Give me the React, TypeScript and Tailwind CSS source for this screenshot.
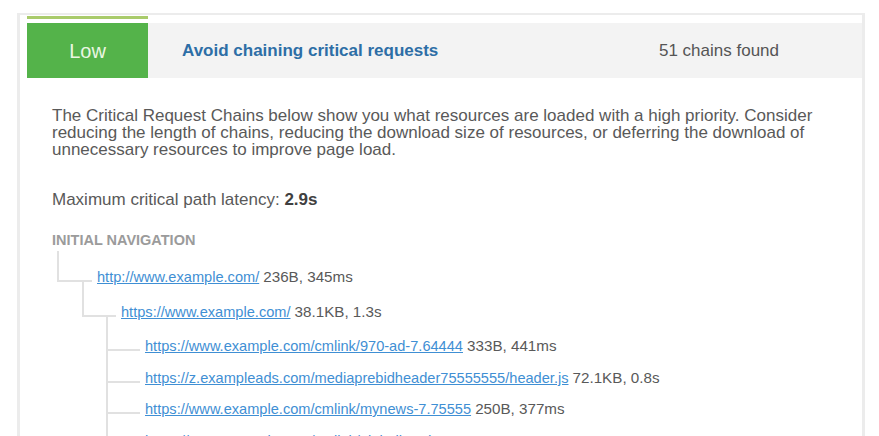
import React from "react";

const chains = [
  { pad: "pl-0", h: "h-[31px]", w: "w-[35px]", url: "http://www.example.com/", info: "236B, 345ms" },
  { pad: "pl-[25px]", h: "h-[35px]", w: "w-[34px]", url: "https://www.example.com/", info: "38.1KB, 1.3s" },
  { pad: "pl-[49px]", h: "h-[34px]", w: "w-[34px]", url: "https://www.example.com/cmlink/970-ad-7.64444", info: "333B, 441ms" },
  { pad: "pl-[49px]", h: "h-[32px]", w: "w-[34px]", url: "https://z.exampleads.com/mediaprebidheader75555555/header.js", info: "72.1KB, 0.8s" },
  { pad: "pl-[49px]", h: "h-[31px]", w: "w-[34px]", url: "https://www.example.com/cmlink/mynews-7.75555", info: "250B, 377ms" },
  { pad: "pl-[49px]", h: "h-[32px]", w: "w-[34px]", url: "https://www.example.com/cmlink/globalheader-7.63333", info: "110B, 376ms" },
];

export default function App() {
  return (
    <div className="h-[436px] overflow-hidden bg-white font-['Liberation_Sans',Arial,sans-serif]">
      <div className="ml-[17px] mt-[13px] w-[848px] border-t-2 border-x-[3px] border-[#ececec] pb-10">
        {/* tab strip */}
        <div className="ml-[7px] mt-[1px] h-[3px] w-[121px] bg-[#a9cb6b]" />
        <div className="mt-[4px] ml-[7px] flex h-[55px]">
          <div className="flex w-[121px] items-center justify-center bg-[#54b34a] text-[20px] font-light text-[#eaf6e2]">
            Low
          </div>
          <div className="flex flex-1 items-center justify-between bg-[#f3f3f3] pl-[34px] pr-[83px] text-[17px]">
            <span className="font-bold text-[#2d6ea6]">Avoid chaining critical requests</span>
            <span className="text-[#555]">51 chains found</span>
          </div>
        </div>

        <div className="pl-[32px] pr-[40px] pt-[29px] text-[#595959]">
          <p className="text-[17px] leading-[17px]">
            The Critical Request Chains below show you what resources are loaded with a high priority. Consider
            reducing the length of chains, reducing the download size of resources, or deferring the download of
            unnecessary resources to improve page load.
          </p>
          <p className="mt-[33px] text-[17px] leading-[17px]">
            Maximum critical path latency: <span className="font-bold text-[#404040]">2.9s</span>
          </p>
          <div className="mt-[24px] text-[14.5px] font-bold uppercase leading-[17px] text-[#9b9b9b]">
            Initial Navigation
          </div>

          <div className="ml-[5px] mt-[2px]">
            {chains.map((c) => (
              <div key={c.url} className={`flex items-end ${c.h} ${c.pad}`}>
                <div className={`${c.w} h-full shrink-0 border-b-2 border-l-2 border-[#e1e1e1]`} />
                <span className="ml-[5px] -mb-[5px] whitespace-nowrap text-[14.6px] leading-[20px]">
                  <a href="#" className="text-[#3f8fd4] underline">{c.url}</a>{" "}
                  <span className="text-[15.2px]">{c.info}</span>
                </span>
              </div>
            ))}
          </div>
        </div>
      </div>
    </div>
  );
}
